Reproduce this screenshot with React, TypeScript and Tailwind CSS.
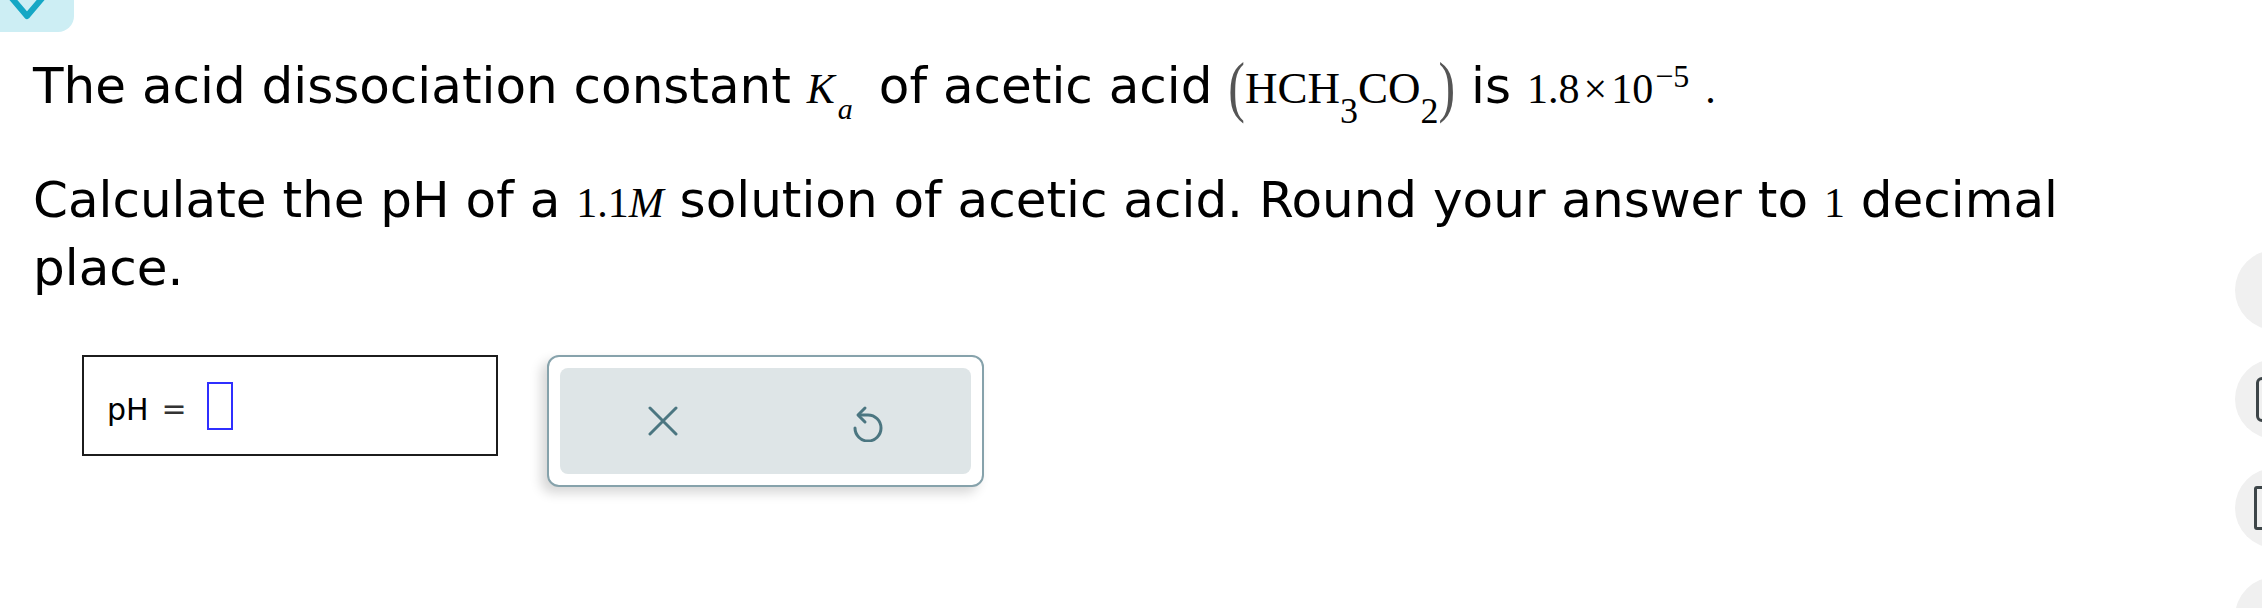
const serif = "inline-block leading-none font-['Liberation_Serif','Times_New_Roman',serif] text-[42px]";
const formula = "inline-block leading-none font-['Liberation_Serif','Times_New_Roman',serif] text-[45px]";
const paren = "inline-block leading-none font-['Liberation_Serif','Times_New_Roman',serif] text-[50px] text-[#555] scale-y-[1.36]";

function CloseIcon() {
    return (
        <svg width="30" height="30" viewBox="0 0 30 30" fill="none">
            <path d="M2 2 28 28M28 2 2 28" stroke="#4b7681" strokeWidth="3" strokeLinecap="round" />
        </svg>
    );
}

function UndoIcon() {
    return (
        <svg width="32" height="42" viewBox="0 0 32 42" fill="none">
            <path
                d="M3 28 A13 13 0 1 0 16 15 L8 15"
                stroke="#4b7681"
                strokeWidth="3"
                strokeLinecap="round"
                strokeLinejoin="round"
            />
            <path d="M13 8 6 15 13 22" stroke="#4b7681" strokeWidth="3" strokeLinecap="round" strokeLinejoin="round" />
        </svg>
    );
}

export default function App() {
    return (
        <div className="flex h-[608px] w-[2262px] overflow-hidden bg-white font-['DejaVu_Sans',sans-serif] text-black">
            {/* MAIN */}
            <div className="flex flex-1 flex-col">
                {/* collapse tab */}
                <div className="flex h-[32px] w-[74px] items-start rounded-br-[16px] bg-[#cdeef4] pl-[7px]">
                    <svg width="40" height="22" viewBox="0 0 40 22" fill="none">
                        <path d="M3 -4 20 16 37 -4" stroke="#15a7c5" strokeWidth="6" strokeLinecap="round" strokeLinejoin="round" />
                    </svg>
                </div>

                <div className="pl-[33px] pt-[20px]">
                    <p className="whitespace-nowrap text-[50px] leading-[68px]">
                        The acid dissociation constant{" "}
                        <span className={serif}>
                            <i>K</i>
                            <span className="relative top-[16px] ml-[3px] text-[30px] italic">a</span>
                        </span>
                        <span className="ml-[26px]">of acetic acid </span>
                        <span className={paren}>(</span>
                        <span className={formula}>
                            HCH
                            <span className="relative top-[20px] text-[36px]">3</span>
                            CO
                            <span className="relative top-[20px] text-[36px]">2</span>
                        </span>
                        <span className={paren}>)</span> is{" "}
                        <span className={serif}>
                            1.8<span className="mx-[4px]">×</span>10
                            <span className="relative top-[-16px] ml-[2px] text-[32px]">−5</span>
                            <span className="ml-[16px]">.</span>
                        </span>
                    </p>

                    <p className="mt-[46px] max-w-[2150px] text-[50px] leading-[68px]">
                        Calculate the pH of a <span className={serif}>1.1<i>M</i></span> solution of acetic acid. Round
                        your answer to <span className={serif}>1</span> decimal place.
                    </p>

                    {/* ANSWER ROW */}
                    <div className="ml-[49px] mt-[53px] flex items-start">
                        <div className="flex h-[101px] w-[416px] items-center border-2 border-[#1c1c1c] pl-[23px]">
                            <span className="mt-[8px] text-[30px] leading-none">pH</span>
                            <span className="ml-[13px] mt-[6px] text-[30px] leading-none text-[#333]">=</span>
                            <span className="ml-[20px] h-[48px] w-[26px] border-2 border-[#2f2fff]" />
                        </div>

                        <div className="ml-[49px] h-[132px] w-[437px] rounded-[12px] border-2 border-[#86a2ab] bg-white p-[11px] shadow-[-6px_6px_12px_rgba(0,0,0,0.16)]">
                            <div className="grid h-full grid-cols-2 rounded-[8px] bg-[#dee5e7]">
                                <button type="button" aria-label="Clear" className="flex items-center justify-center">
                                    <CloseIcon />
                                </button>
                                <button type="button" aria-label="Undo" className="flex items-center justify-center">
                                    <UndoIcon />
                                </button>
                            </div>
                        </div>
                    </div>
                </div>
            </div>

            {/* SIDE TOOLS */}
            <div className="flex w-[27px] shrink-0 flex-col gap-[29px] pt-[250px]">
                <div className="h-[80px] w-[80px] shrink-0 rounded-full bg-[#f0f0f0]" />
                <div className="flex h-[80px] w-[80px] shrink-0 items-center justify-center rounded-full bg-[#f0f0f0]">
                    <div className="h-[45px] w-[38px] rounded-[6px] border-[3px] border-[#3d4548]" />
                </div>
                <div className="flex h-[80px] w-[80px] shrink-0 items-center justify-center rounded-full bg-[#f0f0f0]">
                    <div className="h-[44px] w-[42px] rounded-[3px] border-[3px] border-[#3d4548]" />
                </div>
                <div className="h-[80px] w-[80px] shrink-0 rounded-full bg-[#f0f0f0]" />
            </div>
        </div>
    );
}
